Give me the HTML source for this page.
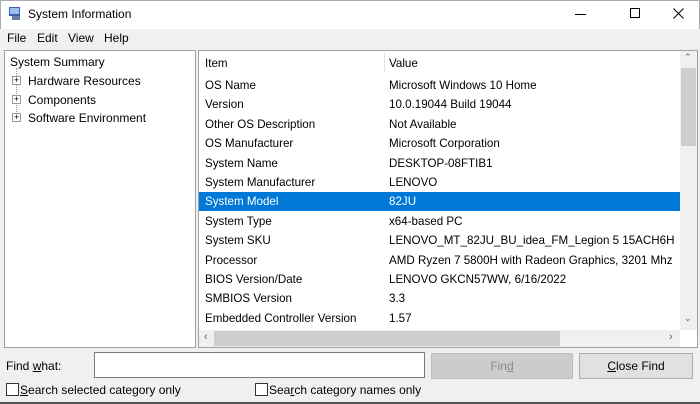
<!DOCTYPE html>
<html><head><style>
*{margin:0;padding:0;box-sizing:border-box}
body{width:700px;height:404px;background:#f0f0f0;font-family:"Liberation Sans",sans-serif;font-size:12px;color:#000;position:relative;overflow:hidden}
.a{position:absolute;white-space:nowrap}
.row{position:absolute;left:0;height:19px;line-height:19px;width:481px;font-size:11.6px}
.row span{position:absolute}
</style></head><body>
<div class="a" style="left:0;top:0;width:700px;height:29px;background:#fff;border:1px solid #aaa;border-bottom:none"></div>
<svg class="a" style="left:7px;top:5px" width="16" height="16"><rect x="2" y="2" width="11" height="9" fill="#3a5fb0"/><rect x="3" y="3" width="9" height="6" fill="#9cc0ee"/><rect x="5" y="11" width="8" height="4" fill="#6d7fa8"/></svg>
<div class="a" style="left:28px;top:7px;font-size:12px">System Information</div>
<div class="a" style="left:575px;top:14px;width:11px;height:1px;background:#000"></div>
<div class="a" style="left:630px;top:8px;width:10px;height:10px;border:1px solid #000"></div>
<svg class="a" style="left:673px;top:8px" width="11" height="11"><path d="M0.5 0.5L10.5 10.5M10.5 0.5L0.5 10.5" stroke="#000" stroke-width="1"/></svg>
<div class="a" style="left:7px;top:31px">File</div>
<div class="a" style="left:37px;top:31px">Edit</div>
<div class="a" style="left:68px;top:31px">View</div>
<div class="a" style="left:104px;top:31px">Help</div>
<div class="a" style="left:4px;top:50px;width:192px;height:298px;background:#fff;border:1px solid #a0a0a0"></div>
<div class="a" style="left:10px;top:55px">System Summary</div>
<div class="a" style="left:16px;top:68px;height:52px;border-left:1px dotted #999"></div>
<div class="a" style="left:12px;top:76px;width:9px;height:9px;border:1px solid #999;background:#fff;font-size:9px;line-height:7px;text-align:center">+</div>
<div class="a" style="left:12px;top:95px;width:9px;height:9px;border:1px solid #999;background:#fff;font-size:9px;line-height:7px;text-align:center">+</div>
<div class="a" style="left:12px;top:113px;width:9px;height:9px;border:1px solid #999;background:#fff;font-size:9px;line-height:7px;text-align:center">+</div>
<div class="a" style="left:28px;top:74px">Hardware Resources</div>
<div class="a" style="left:28px;top:93px">Components</div>
<div class="a" style="left:28px;top:111px">Software Environment</div>
<div class="a" style="left:198px;top:50px;width:500px;height:298px;background:#fff;border:1px solid #a0a0a0"></div>
<div class="a" style="left:384px;top:53px;height:20px;border-left:1px solid #e5e5e5"></div>
<div class="a" style="left:199px;top:54px;width:481px;height:276px;overflow:hidden">
<div class="row" style="top:0"><span style="left:6px">Item</span><span style="left:190px">Value</span></div>
<div class="row" style="top:22px"><span style="left:6px">OS Name</span><span style="left:190px">Microsoft Windows 10 Home</span></div>
<div class="row" style="top:41.4px"><span style="left:6px">Version</span><span style="left:190px">10.0.19044 Build 19044</span></div>
<div class="row" style="top:60.8px"><span style="left:6px">Other OS Description</span><span style="left:190px">Not Available</span></div>
<div class="row" style="top:80.2px"><span style="left:6px">OS Manufacturer</span><span style="left:190px">Microsoft Corporation</span></div>
<div class="row" style="top:99.6px"><span style="left:6px">System Name</span><span style="left:190px">DESKTOP-08FTIB1</span></div>
<div class="row" style="top:119px"><span style="left:6px">System Manufacturer</span><span style="left:190px">LENOVO</span></div>
<div class="row" style="top:138.4px;background:#0078d7;color:#fff"><span style="left:6px">System Model</span><span style="left:190px">82JU</span></div>
<div class="row" style="top:157.8px"><span style="left:6px">System Type</span><span style="left:190px">x64-based PC</span></div>
<div class="row" style="top:177.2px"><span style="left:6px">System SKU</span><span style="left:190px">LENOVO_MT_82JU_BU_idea_FM_Legion 5 15ACH6H</span></div>
<div class="row" style="top:196.6px"><span style="left:6px">Processor</span><span style="left:190px">AMD Ryzen 7 5800H with Radeon Graphics, 3201 Mhz</span></div>
<div class="row" style="top:216px"><span style="left:6px">BIOS Version/Date</span><span style="left:190px">LENOVO GKCN57WW, 6/16/2022</span></div>
<div class="row" style="top:235.4px"><span style="left:6px">SMBIOS Version</span><span style="left:190px">3.3</span></div>
<div class="row" style="top:254.8px"><span style="left:6px">Embedded Controller Version</span><span style="left:190px">1.57</span></div>
</div>
<div class="a" style="left:680px;top:51px;width:17px;height:279px;background:#f0f0f0"></div>
<div class="a" style="left:681px;top:68px;width:15px;height:78px;background:#cdcdcd"></div>
<div class="a" style="left:684px;top:52px;font-size:9px;color:#606060">&#8963;</div>
<div class="a" style="left:684px;top:313px;font-size:9px;color:#606060">&#8964;</div>
<div class="a" style="left:199px;top:330px;width:481px;height:17px;background:#f0f0f0"></div>
<div class="a" style="left:214px;top:331px;width:346px;height:15px;background:#cdcdcd"></div>
<div class="a" style="left:204px;top:331px;font-size:11px;color:#606060">&#8249;</div>
<div class="a" style="left:669px;top:331px;font-size:11px;color:#606060">&#8250;</div>
<div class="a" style="left:6px;top:359px">Find <u>w</u>hat:</div>
<div class="a" style="left:94px;top:352px;width:331px;height:26px;background:#fff;border:1px solid #7a7a7a"></div>
<div class="a" style="left:431px;top:353px;width:142px;height:26px;background:#cccccc;border:1px solid #bfbfbf;color:#8a8a8a;text-align:center;line-height:24px">Fin<u>d</u></div>
<div class="a" style="left:579px;top:353px;width:114px;height:26px;background:#e1e1e1;border:1px solid #adadad;text-align:center;line-height:24px"><u>C</u>lose Find</div>
<div class="a" style="left:6px;top:383px;width:13px;height:13px;border:1px solid #333;background:#fff"></div>
<div class="a" style="left:20px;top:383px"><u>S</u>earch selected category only</div>
<div class="a" style="left:255px;top:383px;width:13px;height:13px;border:1px solid #333;background:#fff"></div>
<div class="a" style="left:269px;top:383px">Sea<u>r</u>ch category names only</div>
<div class="a" style="left:0;top:402px;width:700px;height:2px;background:#555"></div>
</body></html>
